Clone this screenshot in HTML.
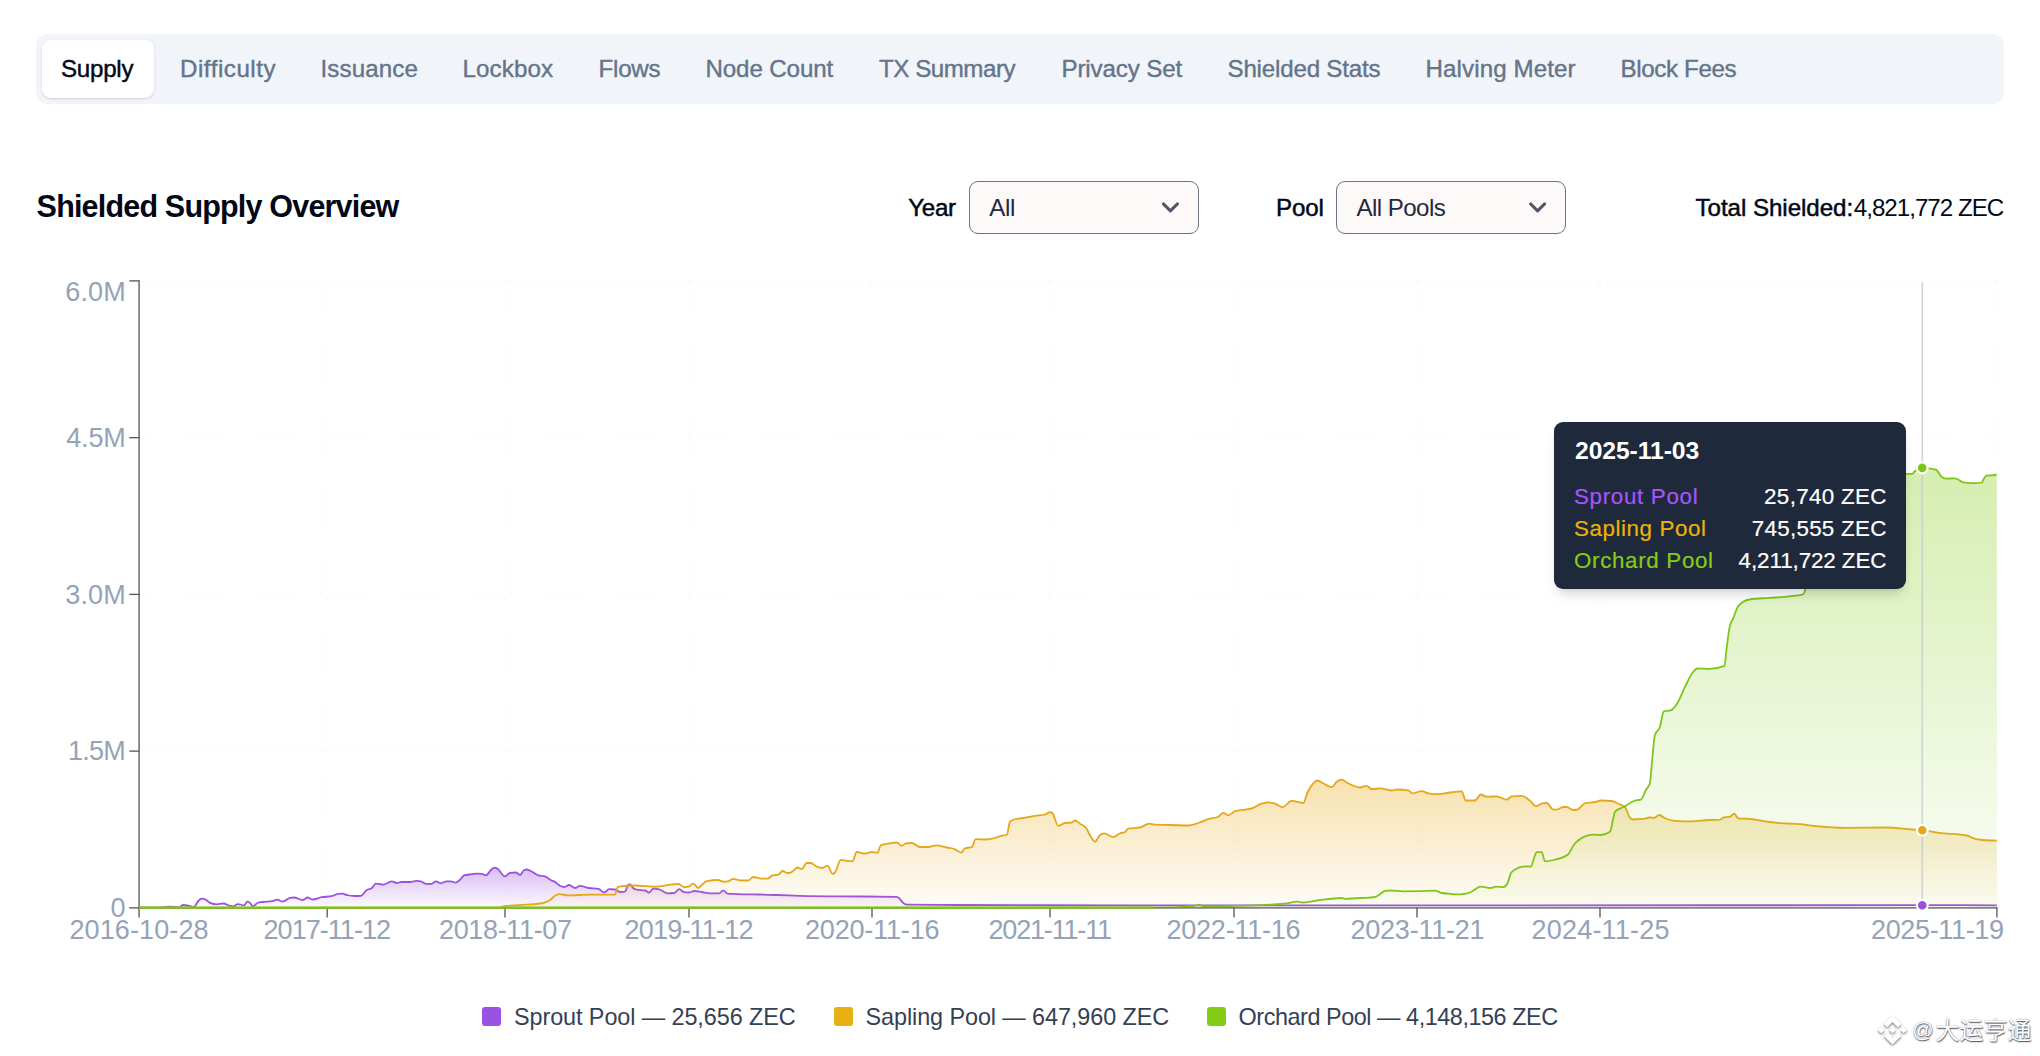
<!DOCTYPE html>
<html lang="en"><head><meta charset="utf-8"><title>Shielded Supply Overview</title>
<style>
*{box-sizing:border-box;margin:0;padding:0}
html,body{width:2040px;height:1056px;background:#fff;overflow:hidden}
body{position:relative;font-family:"Liberation Sans","Noto Sans CJK SC",sans-serif;-webkit-font-smoothing:antialiased}
.t{position:absolute;white-space:nowrap;line-height:1}
.tabs{position:absolute;left:35.7px;top:34.4px;width:1968.6px;height:69.2px;background:#f1f5f9;border-radius:12px}
.tab-on{position:absolute;left:42px;top:40px;width:112px;height:58px;background:#fff;border-radius:9px;box-shadow:0 1px 3px rgba(15,23,42,.10),0 1px 2px rgba(15,23,42,.06)}
.sel{position:absolute;top:181.1px;height:52.9px;width:230.2px;border:1.15px solid #6b7587;border-radius:9px;background:#fef9f9}
.tip{position:absolute;left:1553.6px;top:421.9px;width:352.7px;height:167.5px;background:#1e293b;border-radius:9px;box-shadow:0 9px 13px -4px rgba(0,0,0,.15),0 3px 6px -3px rgba(0,0,0,.10)}
.sw{position:absolute;top:1007px;width:19px;height:19px;border-radius:3px}
svg{position:absolute;left:0;top:0}
.wm{position:absolute;white-space:nowrap;line-height:1;color:#fff;text-shadow:.5px 1px 1.2px rgba(60,66,84,.95),0 0 1.2px rgba(60,66,84,.7)}
</style></head><body>

<nav><div class="tabs"></div><div class="tab-on"></div>
<span class="t" style="left:60.9px;top:57.00px;font-size:24.13px;letter-spacing:-0.221px;color:#020817;font-weight:400;-webkit-text-stroke:0.45px #020817">Supply</span>
<span class="t" style="left:180px;top:57.00px;font-size:24.13px;letter-spacing:0.538px;color:#64748b;font-weight:400;-webkit-text-stroke:0.4px #64748b">Difficulty</span>
<span class="t" style="left:320.5px;top:57.00px;font-size:24.13px;letter-spacing:0.123px;color:#64748b;font-weight:400;-webkit-text-stroke:0.4px #64748b">Issuance</span>
<span class="t" style="left:462.5px;top:57.00px;font-size:24.13px;letter-spacing:0.118px;color:#64748b;font-weight:400;-webkit-text-stroke:0.4px #64748b">Lockbox</span>
<span class="t" style="left:598.5px;top:57.00px;font-size:24.13px;letter-spacing:-0.234px;color:#64748b;font-weight:400;-webkit-text-stroke:0.4px #64748b">Flows</span>
<span class="t" style="left:705.5px;top:57.00px;font-size:24.13px;letter-spacing:-0.117px;color:#64748b;font-weight:400;-webkit-text-stroke:0.4px #64748b">Node Count</span>
<span class="t" style="left:879px;top:57.00px;font-size:24.13px;letter-spacing:-0.465px;color:#64748b;font-weight:400;-webkit-text-stroke:0.4px #64748b">TX Summary</span>
<span class="t" style="left:1061.5px;top:57.00px;font-size:24.13px;letter-spacing:-0.13px;color:#64748b;font-weight:400;-webkit-text-stroke:0.4px #64748b">Privacy Set</span>
<span class="t" style="left:1227.5px;top:57.00px;font-size:24.13px;letter-spacing:-0.193px;color:#64748b;font-weight:400;-webkit-text-stroke:0.4px #64748b">Shielded Stats</span>
<span class="t" style="left:1425.5px;top:57.00px;font-size:24.13px;letter-spacing:0.101px;color:#64748b;font-weight:400;-webkit-text-stroke:0.4px #64748b">Halving Meter</span>
<span class="t" style="left:1620.5px;top:57.00px;font-size:24.13px;letter-spacing:-0.363px;color:#64748b;font-weight:400;-webkit-text-stroke:0.4px #64748b">Block Fees</span>
</nav>
<header>
<span class="t" style="left:36.6px;top:191.00px;font-size:30.52px;letter-spacing:-0.819px;color:#020817;font-weight:700">Shielded Supply Overview</span>
<span class="t" style="left:908.2px;top:196.00px;font-size:24.13px;letter-spacing:-0.27px;color:#020817;font-weight:400;-webkit-text-stroke:0.5px #020817">Year</span><div class="sel" style="left:969px"></div><span class="t" style="left:989.2px;top:196.00px;font-size:24.13px;letter-spacing:-0.275px;color:#1e293b;font-weight:400">All</span>
<span class="t" style="left:1276.1px;top:196.00px;font-size:24.13px;letter-spacing:-0.209px;color:#020817;font-weight:400;-webkit-text-stroke:0.5px #020817">Pool</span><div class="sel" style="left:1336px"></div><span class="t" style="left:1356.5px;top:196.00px;font-size:24.13px;letter-spacing:-0.575px;color:#1e293b;font-weight:400">All Pools</span>
<span class="t" style="left:1695.5px;top:196.00px;font-size:24.13px;letter-spacing:-0.04px;color:#020817;font-weight:400;-webkit-text-stroke:0.5px #020817">Total Shielded:</span><span class="t" style="left:1853.8px;top:196.00px;font-size:24.13px;letter-spacing:-0.988px;color:#020817;font-weight:400">4,821,772 ZEC</span>
</header>
<main>
<svg width="2040" height="1056" viewBox="0 0 2040 1056">
<defs>
<linearGradient id="gs" x1="0" y1="0" x2="0" y2="1"><stop offset="0" stop-color="#9b51e0" stop-opacity=".38"/><stop offset="1" stop-color="#9b51e0" stop-opacity=".03"/></linearGradient>
<linearGradient id="ga" x1="0" y1="0" x2="0" y2="1"><stop offset="0" stop-color="#e8a917" stop-opacity=".35"/><stop offset="1" stop-color="#e8a917" stop-opacity=".03"/></linearGradient>
<linearGradient id="go" x1="0" y1="0" x2="0" y2="1"><stop offset="0" stop-color="#84cc16" stop-opacity=".34"/><stop offset="1" stop-color="#84cc16" stop-opacity=".03"/></linearGradient>
</defs>
<g stroke="#f9fafb" stroke-width="1.3" stroke-dasharray="4 5" fill="none">
<line x1="327" y1="281" x2="327" y2="908"/>
<line x1="505" y1="281" x2="505" y2="908"/>
<line x1="689" y1="281" x2="689" y2="908"/>
<line x1="872" y1="281" x2="872" y2="908"/>
<line x1="1050" y1="281" x2="1050" y2="908"/>
<line x1="1234" y1="281" x2="1234" y2="908"/>
<line x1="1417" y1="281" x2="1417" y2="908"/>
<line x1="1600" y1="281" x2="1600" y2="908"/>
<line x1="1997" y1="281" x2="1997" y2="908"/>
<line x1="139" y1="281" x2="1997" y2="281"/>
<line x1="139" y1="437.7" x2="1997" y2="437.7"/>
<line x1="139" y1="594.4" x2="1997" y2="594.4"/>
<line x1="139" y1="751.1" x2="1997" y2="751.1"/>
</g>
<path d="M139.0,908L139.0,907.7C146.0,907.7 153.0,907.7 160.0,907.7C163.0,907.7 166.0,906.7 169.0,906.7C172.3,906.7 175.7,907.3 179.0,907.3C180.4,907.3 181.9,905.0 183.3,905.0C185.0,905.0 186.6,905.4 188.3,905.7C190.2,906.0 192.1,907.0 194.0,907.0C195.4,907.0 196.9,902.2 198.3,900.8C199.7,899.4 201.1,898.7 202.5,898.7C203.6,898.7 204.7,899.2 205.8,899.7C207.2,900.4 208.6,902.2 210.0,902.8C212.2,903.8 214.5,904.3 216.7,904.3C218.9,904.3 221.1,903.5 223.3,903.5C225.5,903.5 227.8,905.3 230.0,905.8C231.0,906.0 232.0,906.3 233.0,906.3C234.7,906.3 236.3,904.2 238.0,904.2C240.0,904.2 242.0,905.3 244.0,905.3C245.2,905.3 246.3,901.7 247.5,901.7C248.3,901.7 249.2,902.3 250.0,903.0C251.0,903.8 252.0,906.3 253.0,906.3C254.5,906.3 256.0,903.5 257.5,903.0C259.3,902.3 261.2,902.3 263.0,902.0C265.9,901.6 268.8,901.7 271.7,901.2C273.6,900.8 275.6,899.7 277.5,899.7C279.2,899.7 280.8,901.7 282.5,901.7C285.0,901.7 287.5,898.2 290.0,897.8C291.3,897.6 292.7,897.5 294.0,897.5C297.0,897.5 300.0,900.0 303.0,900.0C304.5,900.0 306.0,897.5 307.5,897.5C309.2,897.5 310.8,899.5 312.5,899.5C315.6,899.5 318.6,897.7 321.7,897.2C325.0,896.6 328.4,896.9 331.7,896.2C333.9,895.8 336.1,893.9 338.3,893.8C339.7,893.7 341.1,893.7 342.5,893.7C343.9,893.7 345.3,894.7 346.7,895.0C349.5,895.7 352.2,896.0 355.0,896.0C357.0,896.0 359.0,895.9 361.0,895.8C362.9,895.7 364.8,891.2 366.7,890.0C368.4,888.9 370.0,889.4 371.7,888.3C373.1,887.4 374.4,883.7 375.8,883.7C378.3,883.7 380.8,884.7 383.3,884.7C386.1,884.7 388.9,881.3 391.7,881.3C393.4,881.3 395.0,883.0 396.7,883.0C398.4,883.0 400.0,882.0 401.7,882.0C404.5,882.0 407.2,882.0 410.0,882.0C412.2,882.0 414.5,880.8 416.7,880.8C418.1,880.8 419.4,881.0 420.8,881.3C422.5,881.7 424.1,883.8 425.8,883.8C427.8,883.8 429.7,883.8 431.7,883.8C433.1,883.8 434.4,881.3 435.8,881.3C437.5,881.3 439.1,883.3 440.8,883.3C442.8,883.3 444.7,881.3 446.7,881.3C448.1,881.3 449.4,881.3 450.8,881.3C452.5,881.3 454.1,882.7 455.8,882.7C457.2,882.7 458.6,880.9 460.0,879.7C461.4,878.5 462.8,875.7 464.2,875.3C466.1,874.8 468.1,874.8 470.0,874.5C472.2,874.2 474.5,873.7 476.7,873.7C478.4,873.7 480.0,873.7 481.7,873.8C483.1,873.9 484.4,875.3 485.8,875.3C487.8,875.3 489.7,870.5 491.7,869.2C492.8,868.5 493.9,867.7 495.0,867.7C495.8,867.7 496.7,868.3 497.5,868.8C500.0,870.2 502.5,876.3 505.0,876.3C506.7,876.3 508.3,873.0 510.0,872.8C511.9,872.6 513.9,872.5 515.8,872.5C517.2,872.5 518.6,875.0 520.0,875.0C521.4,875.0 522.8,870.6 524.2,870.0C525.0,869.7 525.9,869.5 526.7,869.5C528.1,869.5 529.4,870.4 530.8,871.0C533.3,872.1 535.8,874.6 538.3,875.3C540.5,876.0 542.8,875.6 545.0,876.3C546.9,876.9 548.9,878.9 550.8,880.0C552.5,880.9 554.1,881.4 555.8,882.5C557.2,883.4 558.6,885.0 560.0,885.8C561.4,886.5 562.8,887.0 564.2,887.0C565.9,887.0 567.5,885.0 569.2,885.0C571.1,885.0 573.1,888.0 575.0,888.0C576.7,888.0 578.3,885.8 580.0,885.8C582.8,885.8 585.5,887.6 588.3,888.0C591.6,888.5 595.0,888.3 598.3,888.8C600.3,889.1 602.2,892.5 604.2,892.5C605.9,892.5 607.5,889.2 609.2,889.2C611.1,889.2 613.1,889.3 615.0,889.5C616.7,889.7 618.3,892.0 620.0,892.0C621.7,892.0 623.3,891.9 625.0,891.7C626.1,891.6 627.2,885.1 628.3,884.7C629.0,884.4 629.6,884.3 630.3,884.3C631.3,884.3 632.3,887.5 633.3,888.3C634.4,889.2 635.6,889.5 636.7,889.7C639.5,890.2 642.2,890.0 645.0,890.5C646.4,890.8 647.8,892.5 649.2,892.5C650.6,892.5 651.9,888.7 653.3,888.7C655.5,888.7 657.8,889.0 660.0,889.7C662.5,890.4 665.0,893.3 667.5,893.3C669.7,893.3 672.0,893.2 674.2,893.0C675.9,892.9 677.5,889.2 679.2,889.2C680.9,889.2 682.5,892.0 684.2,892.2C685.9,892.4 687.5,892.5 689.2,892.5C690.9,892.5 692.5,891.0 694.2,891.0C696.7,891.0 699.2,891.6 701.7,892.0C704.5,892.4 707.2,893.3 710.0,893.3C713.1,893.3 716.1,893.3 719.2,893.3C720.6,893.3 721.9,890.3 723.3,890.3C724.7,890.3 726.1,893.6 727.5,893.7C732.8,894.1 738.0,894.2 743.3,894.3C748.9,894.4 754.4,894.4 760.0,894.5C765.6,894.6 771.1,894.8 776.7,895.0C784.5,895.2 792.2,895.6 800.0,895.8C813.3,896.1 826.7,896.2 840.0,896.3C858.9,896.5 877.8,896.5 896.7,896.8C897.5,896.8 898.4,897.6 899.2,898.3C900.6,899.4 901.9,901.9 903.3,903.0C904.7,904.1 906.1,904.7 907.5,904.7C923.9,904.9 940.3,904.9 956.7,905.0C1014.5,905.2 1072.2,905.3 1130.0,905.3C1253.3,905.3 1376.7,905.3 1500.0,905.3C1640.7,905.3 1781.3,905.2 1922.0,905.2C1946.9,905.2 1971.9,905.2 1996.8,905.3L1996.8,908Z" fill="url(#gs)"/>
<path d="M139.0,907.7C146.0,907.7 153.0,907.7 160.0,907.7C163.0,907.7 166.0,906.7 169.0,906.7C172.3,906.7 175.7,907.3 179.0,907.3C180.4,907.3 181.9,905.0 183.3,905.0C185.0,905.0 186.6,905.4 188.3,905.7C190.2,906.0 192.1,907.0 194.0,907.0C195.4,907.0 196.9,902.2 198.3,900.8C199.7,899.4 201.1,898.7 202.5,898.7C203.6,898.7 204.7,899.2 205.8,899.7C207.2,900.4 208.6,902.2 210.0,902.8C212.2,903.8 214.5,904.3 216.7,904.3C218.9,904.3 221.1,903.5 223.3,903.5C225.5,903.5 227.8,905.3 230.0,905.8C231.0,906.0 232.0,906.3 233.0,906.3C234.7,906.3 236.3,904.2 238.0,904.2C240.0,904.2 242.0,905.3 244.0,905.3C245.2,905.3 246.3,901.7 247.5,901.7C248.3,901.7 249.2,902.3 250.0,903.0C251.0,903.8 252.0,906.3 253.0,906.3C254.5,906.3 256.0,903.5 257.5,903.0C259.3,902.3 261.2,902.3 263.0,902.0C265.9,901.6 268.8,901.7 271.7,901.2C273.6,900.8 275.6,899.7 277.5,899.7C279.2,899.7 280.8,901.7 282.5,901.7C285.0,901.7 287.5,898.2 290.0,897.8C291.3,897.6 292.7,897.5 294.0,897.5C297.0,897.5 300.0,900.0 303.0,900.0C304.5,900.0 306.0,897.5 307.5,897.5C309.2,897.5 310.8,899.5 312.5,899.5C315.6,899.5 318.6,897.7 321.7,897.2C325.0,896.6 328.4,896.9 331.7,896.2C333.9,895.8 336.1,893.9 338.3,893.8C339.7,893.7 341.1,893.7 342.5,893.7C343.9,893.7 345.3,894.7 346.7,895.0C349.5,895.7 352.2,896.0 355.0,896.0C357.0,896.0 359.0,895.9 361.0,895.8C362.9,895.7 364.8,891.2 366.7,890.0C368.4,888.9 370.0,889.4 371.7,888.3C373.1,887.4 374.4,883.7 375.8,883.7C378.3,883.7 380.8,884.7 383.3,884.7C386.1,884.7 388.9,881.3 391.7,881.3C393.4,881.3 395.0,883.0 396.7,883.0C398.4,883.0 400.0,882.0 401.7,882.0C404.5,882.0 407.2,882.0 410.0,882.0C412.2,882.0 414.5,880.8 416.7,880.8C418.1,880.8 419.4,881.0 420.8,881.3C422.5,881.7 424.1,883.8 425.8,883.8C427.8,883.8 429.7,883.8 431.7,883.8C433.1,883.8 434.4,881.3 435.8,881.3C437.5,881.3 439.1,883.3 440.8,883.3C442.8,883.3 444.7,881.3 446.7,881.3C448.1,881.3 449.4,881.3 450.8,881.3C452.5,881.3 454.1,882.7 455.8,882.7C457.2,882.7 458.6,880.9 460.0,879.7C461.4,878.5 462.8,875.7 464.2,875.3C466.1,874.8 468.1,874.8 470.0,874.5C472.2,874.2 474.5,873.7 476.7,873.7C478.4,873.7 480.0,873.7 481.7,873.8C483.1,873.9 484.4,875.3 485.8,875.3C487.8,875.3 489.7,870.5 491.7,869.2C492.8,868.5 493.9,867.7 495.0,867.7C495.8,867.7 496.7,868.3 497.5,868.8C500.0,870.2 502.5,876.3 505.0,876.3C506.7,876.3 508.3,873.0 510.0,872.8C511.9,872.6 513.9,872.5 515.8,872.5C517.2,872.5 518.6,875.0 520.0,875.0C521.4,875.0 522.8,870.6 524.2,870.0C525.0,869.7 525.9,869.5 526.7,869.5C528.1,869.5 529.4,870.4 530.8,871.0C533.3,872.1 535.8,874.6 538.3,875.3C540.5,876.0 542.8,875.6 545.0,876.3C546.9,876.9 548.9,878.9 550.8,880.0C552.5,880.9 554.1,881.4 555.8,882.5C557.2,883.4 558.6,885.0 560.0,885.8C561.4,886.5 562.8,887.0 564.2,887.0C565.9,887.0 567.5,885.0 569.2,885.0C571.1,885.0 573.1,888.0 575.0,888.0C576.7,888.0 578.3,885.8 580.0,885.8C582.8,885.8 585.5,887.6 588.3,888.0C591.6,888.5 595.0,888.3 598.3,888.8C600.3,889.1 602.2,892.5 604.2,892.5C605.9,892.5 607.5,889.2 609.2,889.2C611.1,889.2 613.1,889.3 615.0,889.5C616.7,889.7 618.3,892.0 620.0,892.0C621.7,892.0 623.3,891.9 625.0,891.7C626.1,891.6 627.2,885.1 628.3,884.7C629.0,884.4 629.6,884.3 630.3,884.3C631.3,884.3 632.3,887.5 633.3,888.3C634.4,889.2 635.6,889.5 636.7,889.7C639.5,890.2 642.2,890.0 645.0,890.5C646.4,890.8 647.8,892.5 649.2,892.5C650.6,892.5 651.9,888.7 653.3,888.7C655.5,888.7 657.8,889.0 660.0,889.7C662.5,890.4 665.0,893.3 667.5,893.3C669.7,893.3 672.0,893.2 674.2,893.0C675.9,892.9 677.5,889.2 679.2,889.2C680.9,889.2 682.5,892.0 684.2,892.2C685.9,892.4 687.5,892.5 689.2,892.5C690.9,892.5 692.5,891.0 694.2,891.0C696.7,891.0 699.2,891.6 701.7,892.0C704.5,892.4 707.2,893.3 710.0,893.3C713.1,893.3 716.1,893.3 719.2,893.3C720.6,893.3 721.9,890.3 723.3,890.3C724.7,890.3 726.1,893.6 727.5,893.7C732.8,894.1 738.0,894.2 743.3,894.3C748.9,894.4 754.4,894.4 760.0,894.5C765.6,894.6 771.1,894.8 776.7,895.0C784.5,895.2 792.2,895.6 800.0,895.8C813.3,896.1 826.7,896.2 840.0,896.3C858.9,896.5 877.8,896.5 896.7,896.8C897.5,896.8 898.4,897.6 899.2,898.3C900.6,899.4 901.9,901.9 903.3,903.0C904.7,904.1 906.1,904.7 907.5,904.7C923.9,904.9 940.3,904.9 956.7,905.0C1014.5,905.2 1072.2,905.3 1130.0,905.3C1253.3,905.3 1376.7,905.3 1500.0,905.3C1640.7,905.3 1781.3,905.2 1922.0,905.2C1946.9,905.2 1971.9,905.2 1996.8,905.3" fill="none" stroke="#9b51e0" stroke-width="1.8" stroke-linejoin="round"/>
<path d="M139.0,908L139.0,908.0C259.3,908.0 379.7,908.0 500.0,908.0C500.8,908.0 501.7,906.9 502.5,906.7C505.0,906.0 507.5,906.0 510.0,905.7C515.6,905.1 521.1,905.2 526.7,904.7C532.2,904.3 537.8,904.1 543.3,903.0C545.5,902.5 547.8,901.4 550.0,900.0C551.9,898.8 553.9,896.3 555.8,895.3C556.9,894.7 558.1,894.2 559.2,894.2C562.2,894.2 565.3,895.3 568.3,895.3C575.5,895.3 582.8,894.7 590.0,894.7C598.3,894.7 606.7,894.7 615.0,894.7C615.8,894.7 616.7,888.3 617.5,887.5C618.3,886.7 619.2,886.4 620.0,886.3C625.0,885.8 630.0,885.5 635.0,885.5C642.2,885.5 649.5,886.7 656.7,886.7C661.1,886.7 665.6,885.2 670.0,884.7C672.8,884.4 675.5,884.0 678.3,884.0C680.3,884.0 682.2,887.2 684.2,887.2C685.6,887.2 686.9,887.0 688.3,886.7C690.0,886.3 691.6,883.7 693.3,883.7C695.0,883.7 696.6,888.0 698.3,888.0C699.7,888.0 701.1,885.3 702.5,884.2C703.9,883.1 705.3,881.5 706.7,881.2C710.6,880.4 714.4,880.0 718.3,880.0C720.0,880.0 721.6,881.7 723.3,881.7C725.0,881.7 726.6,881.6 728.3,881.3C730.0,881.0 731.6,878.8 733.3,878.8C735.5,878.8 737.8,880.2 740.0,880.3C742.8,880.4 745.5,880.5 748.3,880.5C750.0,880.5 751.6,877.0 753.3,877.0C755.5,877.0 757.8,878.1 760.0,878.3C762.5,878.6 765.0,878.7 767.5,878.7C769.2,878.7 770.8,875.6 772.5,875.3C774.4,874.9 776.4,875.1 778.3,874.7C779.7,874.4 781.1,871.0 782.5,871.0C784.2,871.0 785.8,873.0 787.5,873.0C788.3,873.0 789.2,872.9 790.0,872.8C791.1,872.6 792.2,871.6 793.3,870.8C794.7,869.8 796.1,867.5 797.5,867.5C798.9,867.5 800.3,869.2 801.7,869.2C803.4,869.2 805.0,863.0 806.7,863.0C808.1,863.0 809.4,863.0 810.8,863.0C812.8,863.0 814.7,865.9 816.7,866.7C818.6,867.5 820.6,868.0 822.5,868.0C824.2,868.0 825.8,865.7 827.5,865.7C829.2,865.7 830.8,873.8 832.5,873.8C833.3,873.8 834.2,873.3 835.0,872.5C836.9,870.5 838.9,860.0 840.8,860.0C842.8,860.0 844.7,860.6 846.7,860.8C848.6,861.0 850.6,861.3 852.5,861.3C853.9,861.3 855.3,852.0 856.7,852.0C859.5,852.0 862.2,853.7 865.0,853.7C867.2,853.7 869.5,852.0 871.7,852.0C873.6,852.0 875.6,852.7 877.5,852.7C878.6,852.7 879.7,845.8 880.8,845.3C883.9,844.0 886.9,843.8 890.0,843.3C892.2,842.9 894.5,842.5 896.7,842.5C898.4,842.5 900.0,845.8 901.7,845.8C903.1,845.8 904.4,843.4 905.8,843.3C907.8,843.1 909.7,843.0 911.7,843.0C914.5,843.0 917.2,847.0 920.0,847.0C922.8,847.0 925.5,847.0 928.3,847.0C931.1,847.0 933.9,845.3 936.7,845.3C940.0,845.3 943.4,846.8 946.7,847.5C949.5,848.1 952.2,848.2 955.0,849.3C957.1,850.1 959.2,852.7 961.3,852.7C962.5,852.7 963.8,848.7 965.0,848.3C967.2,847.6 969.5,847.9 971.7,847.2C973.1,846.8 974.4,839.2 975.8,839.2C978.9,839.2 981.9,839.5 985.0,839.5C988.3,839.5 991.7,839.0 995.0,838.0C996.9,837.4 998.9,836.3 1000.8,835.8C1002.8,835.3 1004.7,835.5 1006.7,835.0C1007.8,834.7 1008.9,822.9 1010.0,821.7C1011.4,820.2 1012.8,820.0 1014.2,819.5C1017.2,818.5 1020.3,818.5 1023.3,818.0C1027.2,817.3 1031.1,816.4 1035.0,815.8C1038.3,815.3 1041.7,815.4 1045.0,814.5C1046.7,814.1 1048.3,812.2 1050.0,812.2C1050.8,812.2 1051.7,812.6 1052.5,813.3C1054.4,815.0 1056.4,825.8 1058.3,825.8C1060.5,825.8 1062.8,823.3 1065.0,823.0C1067.2,822.7 1069.5,822.8 1071.7,822.5C1072.8,822.3 1073.9,820.5 1075.0,820.5C1076.7,820.5 1078.3,822.6 1080.0,823.7C1081.9,825.0 1083.9,825.1 1085.8,827.5C1087.8,829.9 1089.7,835.7 1091.7,838.3C1092.8,839.7 1093.9,841.7 1095.0,841.7C1096.7,841.7 1098.3,836.3 1100.0,835.0C1101.4,833.9 1102.8,833.3 1104.2,833.3C1107.2,833.3 1110.3,837.2 1113.3,837.2C1115.3,837.2 1117.2,834.6 1119.2,833.7C1121.1,832.8 1123.1,833.1 1125.0,832.0C1126.1,831.4 1127.2,828.9 1128.3,828.7C1132.2,827.9 1136.1,828.3 1140.0,827.5C1143.1,826.9 1146.1,823.7 1149.2,823.7C1150.9,823.7 1152.5,824.6 1154.2,824.7C1159.5,824.9 1164.7,824.9 1170.0,825.0C1176.1,825.1 1182.2,825.5 1188.3,825.5C1191.6,825.5 1195.0,824.0 1198.3,823.0C1202.2,821.8 1206.1,819.8 1210.0,818.7C1212.8,817.9 1215.5,818.0 1218.3,816.7C1220.0,815.9 1221.6,812.8 1223.3,812.8C1225.0,812.8 1226.6,815.3 1228.3,815.3C1230.5,815.3 1232.8,811.9 1235.0,811.2C1238.3,810.2 1241.7,810.3 1245.0,809.7C1247.8,809.2 1250.5,808.9 1253.3,807.8C1255.5,806.9 1257.8,805.1 1260.0,804.2C1262.8,803.1 1265.5,802.3 1268.3,802.3C1270.5,802.3 1272.8,803.0 1275.0,803.7C1277.5,804.5 1280.0,807.2 1282.5,807.2C1285.6,807.2 1288.6,800.8 1291.7,800.8C1295.6,800.8 1299.4,803.0 1303.3,803.0C1304.7,803.0 1306.1,795.5 1307.5,792.5C1309.4,788.4 1311.4,785.3 1313.3,783.3C1314.7,781.8 1316.1,780.5 1317.5,780.5C1319.4,780.5 1321.4,782.4 1323.3,783.3C1326.1,784.6 1328.9,787.2 1331.7,787.2C1333.4,787.2 1335.0,783.0 1336.7,781.7C1338.4,780.5 1340.0,779.7 1341.7,779.7C1343.6,779.7 1345.6,782.0 1347.5,783.0C1351.7,785.1 1355.8,787.5 1360.0,787.5C1362.2,787.5 1364.5,785.8 1366.7,785.8C1368.4,785.8 1370.0,789.2 1371.7,789.2C1374.5,789.2 1377.2,788.3 1380.0,788.3C1383.9,788.3 1387.8,790.5 1391.7,790.5C1393.4,790.5 1395.0,789.5 1396.7,789.5C1400.6,789.5 1404.4,789.8 1408.3,790.3C1409.7,790.5 1411.1,793.3 1412.5,793.3C1415.6,793.3 1418.6,791.2 1421.7,791.2C1423.9,791.2 1426.1,792.8 1428.3,793.3C1431.1,793.9 1433.9,794.2 1436.7,794.2C1440.0,794.2 1443.4,793.5 1446.7,793.0C1447.8,792.8 1448.9,792.7 1450.0,792.5C1453.9,792.0 1457.8,791.3 1461.7,791.3C1463.1,791.3 1464.4,800.5 1465.8,800.5C1468.9,800.5 1471.9,800.5 1475.0,800.5C1476.9,800.5 1478.9,794.5 1480.8,794.5C1482.8,794.5 1484.7,796.7 1486.7,796.7C1490.0,796.7 1493.4,796.3 1496.7,796.3C1500.0,796.3 1503.4,799.7 1506.7,799.7C1508.4,799.7 1510.0,796.5 1511.7,796.3C1515.0,796.0 1518.4,795.8 1521.7,795.8C1524.5,795.8 1527.2,798.6 1530.0,800.8C1531.9,802.3 1533.9,806.2 1535.8,806.2C1538.0,806.2 1540.3,803.6 1542.5,803.3C1543.9,803.1 1545.3,803.0 1546.7,803.0C1548.9,803.0 1551.1,809.7 1553.3,809.7C1554.4,809.7 1555.6,809.7 1556.7,809.7C1558.9,809.7 1561.1,807.0 1563.3,807.0C1564.4,807.0 1565.6,807.0 1566.7,807.0C1568.9,807.0 1571.1,810.0 1573.3,810.0C1574.7,810.0 1576.1,809.8 1577.5,809.5C1580.0,808.9 1582.5,803.9 1585.0,803.3C1588.3,802.4 1591.7,802.7 1595.0,802.0C1596.9,801.6 1598.9,800.5 1600.8,800.5C1604.4,800.5 1608.1,800.7 1611.7,801.0C1613.9,801.2 1616.1,802.8 1618.3,803.8C1620.5,804.8 1622.8,804.9 1625.0,807.0C1626.4,808.3 1627.8,814.6 1629.2,816.7C1630.3,818.3 1631.4,819.5 1632.5,819.5C1636.7,819.5 1640.8,819.2 1645.0,818.7C1646.4,818.5 1647.8,817.5 1649.2,817.5C1650.9,817.5 1652.5,817.8 1654.2,817.8C1655.9,817.8 1657.5,815.0 1659.2,815.0C1661.1,815.0 1663.1,817.4 1665.0,818.3C1668.3,819.8 1671.7,820.6 1675.0,820.8C1680.6,821.1 1686.1,821.3 1691.7,821.3C1697.2,821.3 1702.8,820.3 1708.3,820.0C1712.2,819.8 1716.1,819.9 1720.0,819.7C1721.1,819.6 1722.2,817.8 1723.3,817.5C1725.5,817.0 1727.8,817.2 1730.0,816.7C1731.4,816.4 1732.8,813.7 1734.2,813.7C1735.6,813.7 1736.9,818.2 1738.3,818.3C1742.2,818.6 1746.1,818.5 1750.0,818.8C1755.6,819.3 1761.1,820.9 1766.7,821.7C1771.1,822.3 1775.6,822.7 1780.0,823.1C1786.6,823.7 1793.3,823.6 1799.9,824.2C1804.3,824.6 1808.7,825.3 1813.1,825.8C1824.2,826.9 1835.2,827.8 1846.3,827.8C1859.6,827.8 1872.8,827.5 1886.1,827.5C1894.9,827.5 1903.8,828.9 1912.6,829.5C1915.8,829.7 1919.1,829.9 1922.3,830.2C1927.9,830.8 1933.5,832.1 1939.1,832.8C1948.4,834.0 1957.6,833.7 1966.9,835.5C1969.1,835.9 1971.4,837.7 1973.6,838.4C1976.7,839.4 1979.7,839.7 1982.8,840.0C1987.5,840.4 1992.1,840.5 1996.8,840.6L1996.8,908Z" fill="url(#ga)"/>
<path d="M139.0,908.0C259.3,908.0 379.7,908.0 500.0,908.0C500.8,908.0 501.7,906.9 502.5,906.7C505.0,906.0 507.5,906.0 510.0,905.7C515.6,905.1 521.1,905.2 526.7,904.7C532.2,904.3 537.8,904.1 543.3,903.0C545.5,902.5 547.8,901.4 550.0,900.0C551.9,898.8 553.9,896.3 555.8,895.3C556.9,894.7 558.1,894.2 559.2,894.2C562.2,894.2 565.3,895.3 568.3,895.3C575.5,895.3 582.8,894.7 590.0,894.7C598.3,894.7 606.7,894.7 615.0,894.7C615.8,894.7 616.7,888.3 617.5,887.5C618.3,886.7 619.2,886.4 620.0,886.3C625.0,885.8 630.0,885.5 635.0,885.5C642.2,885.5 649.5,886.7 656.7,886.7C661.1,886.7 665.6,885.2 670.0,884.7C672.8,884.4 675.5,884.0 678.3,884.0C680.3,884.0 682.2,887.2 684.2,887.2C685.6,887.2 686.9,887.0 688.3,886.7C690.0,886.3 691.6,883.7 693.3,883.7C695.0,883.7 696.6,888.0 698.3,888.0C699.7,888.0 701.1,885.3 702.5,884.2C703.9,883.1 705.3,881.5 706.7,881.2C710.6,880.4 714.4,880.0 718.3,880.0C720.0,880.0 721.6,881.7 723.3,881.7C725.0,881.7 726.6,881.6 728.3,881.3C730.0,881.0 731.6,878.8 733.3,878.8C735.5,878.8 737.8,880.2 740.0,880.3C742.8,880.4 745.5,880.5 748.3,880.5C750.0,880.5 751.6,877.0 753.3,877.0C755.5,877.0 757.8,878.1 760.0,878.3C762.5,878.6 765.0,878.7 767.5,878.7C769.2,878.7 770.8,875.6 772.5,875.3C774.4,874.9 776.4,875.1 778.3,874.7C779.7,874.4 781.1,871.0 782.5,871.0C784.2,871.0 785.8,873.0 787.5,873.0C788.3,873.0 789.2,872.9 790.0,872.8C791.1,872.6 792.2,871.6 793.3,870.8C794.7,869.8 796.1,867.5 797.5,867.5C798.9,867.5 800.3,869.2 801.7,869.2C803.4,869.2 805.0,863.0 806.7,863.0C808.1,863.0 809.4,863.0 810.8,863.0C812.8,863.0 814.7,865.9 816.7,866.7C818.6,867.5 820.6,868.0 822.5,868.0C824.2,868.0 825.8,865.7 827.5,865.7C829.2,865.7 830.8,873.8 832.5,873.8C833.3,873.8 834.2,873.3 835.0,872.5C836.9,870.5 838.9,860.0 840.8,860.0C842.8,860.0 844.7,860.6 846.7,860.8C848.6,861.0 850.6,861.3 852.5,861.3C853.9,861.3 855.3,852.0 856.7,852.0C859.5,852.0 862.2,853.7 865.0,853.7C867.2,853.7 869.5,852.0 871.7,852.0C873.6,852.0 875.6,852.7 877.5,852.7C878.6,852.7 879.7,845.8 880.8,845.3C883.9,844.0 886.9,843.8 890.0,843.3C892.2,842.9 894.5,842.5 896.7,842.5C898.4,842.5 900.0,845.8 901.7,845.8C903.1,845.8 904.4,843.4 905.8,843.3C907.8,843.1 909.7,843.0 911.7,843.0C914.5,843.0 917.2,847.0 920.0,847.0C922.8,847.0 925.5,847.0 928.3,847.0C931.1,847.0 933.9,845.3 936.7,845.3C940.0,845.3 943.4,846.8 946.7,847.5C949.5,848.1 952.2,848.2 955.0,849.3C957.1,850.1 959.2,852.7 961.3,852.7C962.5,852.7 963.8,848.7 965.0,848.3C967.2,847.6 969.5,847.9 971.7,847.2C973.1,846.8 974.4,839.2 975.8,839.2C978.9,839.2 981.9,839.5 985.0,839.5C988.3,839.5 991.7,839.0 995.0,838.0C996.9,837.4 998.9,836.3 1000.8,835.8C1002.8,835.3 1004.7,835.5 1006.7,835.0C1007.8,834.7 1008.9,822.9 1010.0,821.7C1011.4,820.2 1012.8,820.0 1014.2,819.5C1017.2,818.5 1020.3,818.5 1023.3,818.0C1027.2,817.3 1031.1,816.4 1035.0,815.8C1038.3,815.3 1041.7,815.4 1045.0,814.5C1046.7,814.1 1048.3,812.2 1050.0,812.2C1050.8,812.2 1051.7,812.6 1052.5,813.3C1054.4,815.0 1056.4,825.8 1058.3,825.8C1060.5,825.8 1062.8,823.3 1065.0,823.0C1067.2,822.7 1069.5,822.8 1071.7,822.5C1072.8,822.3 1073.9,820.5 1075.0,820.5C1076.7,820.5 1078.3,822.6 1080.0,823.7C1081.9,825.0 1083.9,825.1 1085.8,827.5C1087.8,829.9 1089.7,835.7 1091.7,838.3C1092.8,839.7 1093.9,841.7 1095.0,841.7C1096.7,841.7 1098.3,836.3 1100.0,835.0C1101.4,833.9 1102.8,833.3 1104.2,833.3C1107.2,833.3 1110.3,837.2 1113.3,837.2C1115.3,837.2 1117.2,834.6 1119.2,833.7C1121.1,832.8 1123.1,833.1 1125.0,832.0C1126.1,831.4 1127.2,828.9 1128.3,828.7C1132.2,827.9 1136.1,828.3 1140.0,827.5C1143.1,826.9 1146.1,823.7 1149.2,823.7C1150.9,823.7 1152.5,824.6 1154.2,824.7C1159.5,824.9 1164.7,824.9 1170.0,825.0C1176.1,825.1 1182.2,825.5 1188.3,825.5C1191.6,825.5 1195.0,824.0 1198.3,823.0C1202.2,821.8 1206.1,819.8 1210.0,818.7C1212.8,817.9 1215.5,818.0 1218.3,816.7C1220.0,815.9 1221.6,812.8 1223.3,812.8C1225.0,812.8 1226.6,815.3 1228.3,815.3C1230.5,815.3 1232.8,811.9 1235.0,811.2C1238.3,810.2 1241.7,810.3 1245.0,809.7C1247.8,809.2 1250.5,808.9 1253.3,807.8C1255.5,806.9 1257.8,805.1 1260.0,804.2C1262.8,803.1 1265.5,802.3 1268.3,802.3C1270.5,802.3 1272.8,803.0 1275.0,803.7C1277.5,804.5 1280.0,807.2 1282.5,807.2C1285.6,807.2 1288.6,800.8 1291.7,800.8C1295.6,800.8 1299.4,803.0 1303.3,803.0C1304.7,803.0 1306.1,795.5 1307.5,792.5C1309.4,788.4 1311.4,785.3 1313.3,783.3C1314.7,781.8 1316.1,780.5 1317.5,780.5C1319.4,780.5 1321.4,782.4 1323.3,783.3C1326.1,784.6 1328.9,787.2 1331.7,787.2C1333.4,787.2 1335.0,783.0 1336.7,781.7C1338.4,780.5 1340.0,779.7 1341.7,779.7C1343.6,779.7 1345.6,782.0 1347.5,783.0C1351.7,785.1 1355.8,787.5 1360.0,787.5C1362.2,787.5 1364.5,785.8 1366.7,785.8C1368.4,785.8 1370.0,789.2 1371.7,789.2C1374.5,789.2 1377.2,788.3 1380.0,788.3C1383.9,788.3 1387.8,790.5 1391.7,790.5C1393.4,790.5 1395.0,789.5 1396.7,789.5C1400.6,789.5 1404.4,789.8 1408.3,790.3C1409.7,790.5 1411.1,793.3 1412.5,793.3C1415.6,793.3 1418.6,791.2 1421.7,791.2C1423.9,791.2 1426.1,792.8 1428.3,793.3C1431.1,793.9 1433.9,794.2 1436.7,794.2C1440.0,794.2 1443.4,793.5 1446.7,793.0C1447.8,792.8 1448.9,792.7 1450.0,792.5C1453.9,792.0 1457.8,791.3 1461.7,791.3C1463.1,791.3 1464.4,800.5 1465.8,800.5C1468.9,800.5 1471.9,800.5 1475.0,800.5C1476.9,800.5 1478.9,794.5 1480.8,794.5C1482.8,794.5 1484.7,796.7 1486.7,796.7C1490.0,796.7 1493.4,796.3 1496.7,796.3C1500.0,796.3 1503.4,799.7 1506.7,799.7C1508.4,799.7 1510.0,796.5 1511.7,796.3C1515.0,796.0 1518.4,795.8 1521.7,795.8C1524.5,795.8 1527.2,798.6 1530.0,800.8C1531.9,802.3 1533.9,806.2 1535.8,806.2C1538.0,806.2 1540.3,803.6 1542.5,803.3C1543.9,803.1 1545.3,803.0 1546.7,803.0C1548.9,803.0 1551.1,809.7 1553.3,809.7C1554.4,809.7 1555.6,809.7 1556.7,809.7C1558.9,809.7 1561.1,807.0 1563.3,807.0C1564.4,807.0 1565.6,807.0 1566.7,807.0C1568.9,807.0 1571.1,810.0 1573.3,810.0C1574.7,810.0 1576.1,809.8 1577.5,809.5C1580.0,808.9 1582.5,803.9 1585.0,803.3C1588.3,802.4 1591.7,802.7 1595.0,802.0C1596.9,801.6 1598.9,800.5 1600.8,800.5C1604.4,800.5 1608.1,800.7 1611.7,801.0C1613.9,801.2 1616.1,802.8 1618.3,803.8C1620.5,804.8 1622.8,804.9 1625.0,807.0C1626.4,808.3 1627.8,814.6 1629.2,816.7C1630.3,818.3 1631.4,819.5 1632.5,819.5C1636.7,819.5 1640.8,819.2 1645.0,818.7C1646.4,818.5 1647.8,817.5 1649.2,817.5C1650.9,817.5 1652.5,817.8 1654.2,817.8C1655.9,817.8 1657.5,815.0 1659.2,815.0C1661.1,815.0 1663.1,817.4 1665.0,818.3C1668.3,819.8 1671.7,820.6 1675.0,820.8C1680.6,821.1 1686.1,821.3 1691.7,821.3C1697.2,821.3 1702.8,820.3 1708.3,820.0C1712.2,819.8 1716.1,819.9 1720.0,819.7C1721.1,819.6 1722.2,817.8 1723.3,817.5C1725.5,817.0 1727.8,817.2 1730.0,816.7C1731.4,816.4 1732.8,813.7 1734.2,813.7C1735.6,813.7 1736.9,818.2 1738.3,818.3C1742.2,818.6 1746.1,818.5 1750.0,818.8C1755.6,819.3 1761.1,820.9 1766.7,821.7C1771.1,822.3 1775.6,822.7 1780.0,823.1C1786.6,823.7 1793.3,823.6 1799.9,824.2C1804.3,824.6 1808.7,825.3 1813.1,825.8C1824.2,826.9 1835.2,827.8 1846.3,827.8C1859.6,827.8 1872.8,827.5 1886.1,827.5C1894.9,827.5 1903.8,828.9 1912.6,829.5C1915.8,829.7 1919.1,829.9 1922.3,830.2C1927.9,830.8 1933.5,832.1 1939.1,832.8C1948.4,834.0 1957.6,833.7 1966.9,835.5C1969.1,835.9 1971.4,837.7 1973.6,838.4C1976.7,839.4 1979.7,839.7 1982.8,840.0C1987.5,840.4 1992.1,840.5 1996.8,840.6" fill="none" stroke="#e5a81a" stroke-width="1.8" stroke-linejoin="round"/>
<path d="M139.0,908L139.0,907.7C477.1,907.7 815.2,907.7 1153.3,907.7C1167.2,907.7 1181.1,907.1 1195.0,905.8C1196.4,905.7 1197.8,904.7 1199.2,904.7C1200.6,904.7 1201.9,906.3 1203.3,906.3C1214.4,906.3 1225.6,906.1 1236.7,905.8C1247.8,905.5 1258.9,905.4 1270.0,904.7C1275.6,904.3 1281.1,904.0 1286.7,903.3C1290.0,902.9 1293.4,901.7 1296.7,901.7C1298.9,901.7 1301.1,902.5 1303.3,902.5C1308.9,902.5 1314.4,900.7 1320.0,900.0C1327.2,899.1 1334.5,898.0 1341.7,898.0C1342.8,898.0 1343.9,898.8 1345.0,898.8C1350.6,898.8 1356.1,898.4 1361.7,898.0C1366.1,897.7 1370.6,897.7 1375.0,897.0C1376.7,896.7 1378.3,895.2 1380.0,894.2C1381.7,893.2 1383.3,891.0 1385.0,890.8C1386.7,890.6 1388.3,890.5 1390.0,890.5C1394.4,890.5 1398.9,891.3 1403.3,891.3C1408.9,891.3 1414.4,891.3 1420.0,891.2C1425.0,891.1 1430.0,890.7 1435.0,890.7C1437.2,890.7 1439.5,892.6 1441.7,893.0C1444.5,893.5 1447.2,893.6 1450.0,893.8C1453.3,894.1 1456.7,894.3 1460.0,894.3C1463.3,894.3 1466.7,893.7 1470.0,892.5C1473.6,891.2 1477.2,886.7 1480.8,886.7C1484.1,886.7 1487.5,888.0 1490.8,888.0C1492.5,888.0 1494.1,886.7 1495.8,886.7C1498.3,886.7 1500.8,887.2 1503.3,887.2C1504.7,887.2 1506.1,885.9 1507.5,883.3C1508.6,881.3 1509.7,875.3 1510.8,873.3C1512.2,870.8 1513.6,870.4 1515.0,869.5C1518.3,867.4 1521.7,866.3 1525.0,866.3C1526.9,866.3 1528.9,866.7 1530.8,866.7C1531.9,866.7 1533.1,860.2 1534.2,857.5C1535.0,855.5 1535.9,852.2 1536.7,852.2C1538.4,852.2 1540.0,852.2 1541.7,852.2C1542.8,852.2 1543.9,861.3 1545.0,861.3C1547.8,861.3 1550.5,860.7 1553.3,860.0C1558.3,858.8 1563.3,858.1 1568.3,854.2C1570.0,852.9 1571.6,848.1 1573.3,845.8C1574.4,844.2 1575.6,842.7 1576.7,841.7C1582.2,837.0 1587.8,834.7 1593.3,834.7C1595.8,834.7 1598.3,835.0 1600.8,835.0C1603.9,835.0 1606.9,833.9 1610.0,831.7C1611.1,830.9 1612.2,822.6 1613.3,818.3C1613.9,816.1 1614.4,812.3 1615.0,811.7C1618.3,808.1 1621.7,808.2 1625.0,806.3C1628.3,804.4 1631.7,801.4 1635.0,800.5C1636.9,800.0 1638.9,800.2 1640.8,799.7C1642.5,799.2 1644.2,793.1 1645.9,790.0C1647.2,787.6 1648.6,787.6 1649.9,782.9C1650.6,780.5 1651.2,769.5 1651.9,763.0C1652.9,753.3 1653.9,738.5 1654.9,735.2C1656.5,729.9 1658.2,732.0 1659.8,727.2C1661.1,723.3 1662.5,711.7 1663.8,711.3C1666.1,710.6 1668.5,711.0 1670.8,710.3C1672.8,709.7 1674.7,707.1 1676.7,704.3C1679.7,700.0 1682.7,691.3 1685.7,685.4C1688.0,680.8 1690.4,675.4 1692.7,672.5C1694.3,670.5 1696.0,668.5 1697.6,668.5C1701.6,668.5 1705.6,668.9 1709.6,668.9C1714.6,668.9 1719.5,667.9 1724.5,665.9C1725.2,665.6 1725.8,654.8 1726.5,649.6C1727.5,641.8 1728.5,632.8 1729.5,627.7C1730.8,621.1 1732.1,621.0 1733.4,617.8C1735.1,613.7 1736.7,607.8 1738.4,605.9C1742.1,601.6 1745.7,600.1 1749.4,599.5C1756.0,598.4 1762.6,598.4 1769.2,597.9C1775.8,597.4 1782.5,597.1 1789.1,596.3C1793.8,595.8 1798.4,595.6 1803.1,594.3C1803.8,594.1 1804.4,592.8 1805.1,589.9C1805.7,587.1 1806.4,568.5 1807.0,560.0C1808.3,542.0 1809.7,529.8 1811.0,525.0C1814.7,511.7 1818.3,509.1 1822.0,505.0C1829.7,496.3 1837.3,495.7 1845.0,492.0C1856.7,486.4 1868.3,483.3 1880.0,480.0C1888.7,477.5 1897.5,473.8 1906.2,473.8C1908.3,473.8 1910.3,473.8 1912.4,473.8C1913.2,473.8 1913.9,471.9 1914.7,471.2C1917.2,469.0 1919.7,467.9 1922.2,467.9C1925.0,467.9 1927.8,468.2 1930.6,468.6C1932.4,468.9 1934.1,469.0 1935.9,469.7C1936.9,470.1 1937.8,471.7 1938.8,472.9C1939.8,474.1 1940.8,476.4 1941.8,477.1C1943.2,478.1 1944.5,478.6 1945.9,478.6C1948.8,478.6 1951.8,478.4 1954.7,478.4C1955.9,478.4 1957.0,479.0 1958.2,479.5C1959.6,480.1 1961.0,481.7 1962.4,482.1C1964.1,482.6 1965.9,482.8 1967.6,482.9C1970.4,483.1 1973.1,483.2 1975.9,483.2C1977.9,483.2 1979.8,483.0 1981.8,482.5C1982.6,482.3 1983.3,479.3 1984.1,478.2C1984.9,477.0 1985.7,475.7 1986.5,475.6C1988.1,475.4 1989.6,475.4 1991.2,475.3C1993.1,475.1 1994.9,474.9 1996.8,474.7L1996.8,908Z" fill="url(#go)"/>
<path d="M139.0,907.7C477.1,907.7 815.2,907.7 1153.3,907.7C1167.2,907.7 1181.1,907.1 1195.0,905.8C1196.4,905.7 1197.8,904.7 1199.2,904.7C1200.6,904.7 1201.9,906.3 1203.3,906.3C1214.4,906.3 1225.6,906.1 1236.7,905.8C1247.8,905.5 1258.9,905.4 1270.0,904.7C1275.6,904.3 1281.1,904.0 1286.7,903.3C1290.0,902.9 1293.4,901.7 1296.7,901.7C1298.9,901.7 1301.1,902.5 1303.3,902.5C1308.9,902.5 1314.4,900.7 1320.0,900.0C1327.2,899.1 1334.5,898.0 1341.7,898.0C1342.8,898.0 1343.9,898.8 1345.0,898.8C1350.6,898.8 1356.1,898.4 1361.7,898.0C1366.1,897.7 1370.6,897.7 1375.0,897.0C1376.7,896.7 1378.3,895.2 1380.0,894.2C1381.7,893.2 1383.3,891.0 1385.0,890.8C1386.7,890.6 1388.3,890.5 1390.0,890.5C1394.4,890.5 1398.9,891.3 1403.3,891.3C1408.9,891.3 1414.4,891.3 1420.0,891.2C1425.0,891.1 1430.0,890.7 1435.0,890.7C1437.2,890.7 1439.5,892.6 1441.7,893.0C1444.5,893.5 1447.2,893.6 1450.0,893.8C1453.3,894.1 1456.7,894.3 1460.0,894.3C1463.3,894.3 1466.7,893.7 1470.0,892.5C1473.6,891.2 1477.2,886.7 1480.8,886.7C1484.1,886.7 1487.5,888.0 1490.8,888.0C1492.5,888.0 1494.1,886.7 1495.8,886.7C1498.3,886.7 1500.8,887.2 1503.3,887.2C1504.7,887.2 1506.1,885.9 1507.5,883.3C1508.6,881.3 1509.7,875.3 1510.8,873.3C1512.2,870.8 1513.6,870.4 1515.0,869.5C1518.3,867.4 1521.7,866.3 1525.0,866.3C1526.9,866.3 1528.9,866.7 1530.8,866.7C1531.9,866.7 1533.1,860.2 1534.2,857.5C1535.0,855.5 1535.9,852.2 1536.7,852.2C1538.4,852.2 1540.0,852.2 1541.7,852.2C1542.8,852.2 1543.9,861.3 1545.0,861.3C1547.8,861.3 1550.5,860.7 1553.3,860.0C1558.3,858.8 1563.3,858.1 1568.3,854.2C1570.0,852.9 1571.6,848.1 1573.3,845.8C1574.4,844.2 1575.6,842.7 1576.7,841.7C1582.2,837.0 1587.8,834.7 1593.3,834.7C1595.8,834.7 1598.3,835.0 1600.8,835.0C1603.9,835.0 1606.9,833.9 1610.0,831.7C1611.1,830.9 1612.2,822.6 1613.3,818.3C1613.9,816.1 1614.4,812.3 1615.0,811.7C1618.3,808.1 1621.7,808.2 1625.0,806.3C1628.3,804.4 1631.7,801.4 1635.0,800.5C1636.9,800.0 1638.9,800.2 1640.8,799.7C1642.5,799.2 1644.2,793.1 1645.9,790.0C1647.2,787.6 1648.6,787.6 1649.9,782.9C1650.6,780.5 1651.2,769.5 1651.9,763.0C1652.9,753.3 1653.9,738.5 1654.9,735.2C1656.5,729.9 1658.2,732.0 1659.8,727.2C1661.1,723.3 1662.5,711.7 1663.8,711.3C1666.1,710.6 1668.5,711.0 1670.8,710.3C1672.8,709.7 1674.7,707.1 1676.7,704.3C1679.7,700.0 1682.7,691.3 1685.7,685.4C1688.0,680.8 1690.4,675.4 1692.7,672.5C1694.3,670.5 1696.0,668.5 1697.6,668.5C1701.6,668.5 1705.6,668.9 1709.6,668.9C1714.6,668.9 1719.5,667.9 1724.5,665.9C1725.2,665.6 1725.8,654.8 1726.5,649.6C1727.5,641.8 1728.5,632.8 1729.5,627.7C1730.8,621.1 1732.1,621.0 1733.4,617.8C1735.1,613.7 1736.7,607.8 1738.4,605.9C1742.1,601.6 1745.7,600.1 1749.4,599.5C1756.0,598.4 1762.6,598.4 1769.2,597.9C1775.8,597.4 1782.5,597.1 1789.1,596.3C1793.8,595.8 1798.4,595.6 1803.1,594.3C1803.8,594.1 1804.4,592.8 1805.1,589.9C1805.7,587.1 1806.4,568.5 1807.0,560.0C1808.3,542.0 1809.7,529.8 1811.0,525.0C1814.7,511.7 1818.3,509.1 1822.0,505.0C1829.7,496.3 1837.3,495.7 1845.0,492.0C1856.7,486.4 1868.3,483.3 1880.0,480.0C1888.7,477.5 1897.5,473.8 1906.2,473.8C1908.3,473.8 1910.3,473.8 1912.4,473.8C1913.2,473.8 1913.9,471.9 1914.7,471.2C1917.2,469.0 1919.7,467.9 1922.2,467.9C1925.0,467.9 1927.8,468.2 1930.6,468.6C1932.4,468.9 1934.1,469.0 1935.9,469.7C1936.9,470.1 1937.8,471.7 1938.8,472.9C1939.8,474.1 1940.8,476.4 1941.8,477.1C1943.2,478.1 1944.5,478.6 1945.9,478.6C1948.8,478.6 1951.8,478.4 1954.7,478.4C1955.9,478.4 1957.0,479.0 1958.2,479.5C1959.6,480.1 1961.0,481.7 1962.4,482.1C1964.1,482.6 1965.9,482.8 1967.6,482.9C1970.4,483.1 1973.1,483.2 1975.9,483.2C1977.9,483.2 1979.8,483.0 1981.8,482.5C1982.6,482.3 1983.3,479.3 1984.1,478.2C1984.9,477.0 1985.7,475.7 1986.5,475.6C1988.1,475.4 1989.6,475.4 1991.2,475.3C1993.1,475.1 1994.9,474.9 1996.8,474.7" fill="none" stroke="#7fc51a" stroke-width="1.8" stroke-linejoin="round"/>
<g stroke="#828282" stroke-width="1.8" fill="none">
<line x1="139.1" y1="280.2" x2="139.1" y2="917.4"/>
<line x1="139" y1="907.9" x2="1997.6" y2="907.9"/>
</g>
<g stroke="#555" stroke-width="1.3" fill="none">
<line x1="129.3" y1="280.9" x2="139.2" y2="280.9"/>
<line x1="129.3" y1="437.7" x2="139.2" y2="437.7"/>
<line x1="129.3" y1="594.4" x2="139.2" y2="594.4"/>
<line x1="129.3" y1="751.1" x2="139.2" y2="751.1"/>
<line x1="129.3" y1="907.9" x2="139.2" y2="907.9"/>
<line x1="327.2" y1="907.8" x2="327.2" y2="917.4"/>
<line x1="505" y1="907.8" x2="505" y2="917.4"/>
<line x1="689" y1="907.8" x2="689" y2="917.4"/>
<line x1="872" y1="907.8" x2="872" y2="917.4"/>
<line x1="1050" y1="907.8" x2="1050" y2="917.4"/>
<line x1="1234" y1="907.8" x2="1234" y2="917.4"/>
<line x1="1417" y1="907.8" x2="1417" y2="917.4"/>
<line x1="1600" y1="907.8" x2="1600" y2="917.4"/>
<line x1="1996.9" y1="907.8" x2="1996.9" y2="917.4"/>
</g>
<path d="M139.2,907.7 L1153.3,907.7" fill="none" stroke="#7fc51a" stroke-width="2.2"/>
<line x1="1922.2" y1="282" x2="1922.2" y2="908" stroke="#c9cbd0" stroke-width="1.3"/>
<circle cx="1922.2" cy="467.9" r="5.4" fill="#7fc51a" stroke="#fff" stroke-width="2.2"/>
<circle cx="1922.3" cy="830.2" r="5.4" fill="#e5a81a" stroke="#fff" stroke-width="2.2"/>
<circle cx="1922.3" cy="905.2" r="5.4" fill="#9b51e0" stroke="#fff" stroke-width="2.2"/>
<text x="65.2" y="300.7" font-size="27.03" letter-spacing="0.182" fill="#94a3b8">6.0M</text>
<text x="66.2" y="446.8" font-size="27.03" letter-spacing="-0.152" fill="#94a3b8">4.5M</text>
<text x="65.2" y="603.5" font-size="27.03" letter-spacing="0.182" fill="#94a3b8">3.0M</text>
<text x="68" y="760.2" font-size="27.03" letter-spacing="-0.752" fill="#94a3b8">1.5M</text>
<text x="110.4" y="916.8" font-size="27.03" letter-spacing="0" fill="#94a3b8">0</text>
<text x="69.5" y="938.6" font-size="27.03" letter-spacing="0.093" fill="#94a3b8">2016-10-28</text>
<text x="263.5" y="938.6" font-size="27.03" letter-spacing="-0.962" fill="#94a3b8">2017-11-12</text>
<text x="439" y="938.6" font-size="27.03" letter-spacing="-0.351" fill="#94a3b8">2018-11-07</text>
<text x="624.5" y="938.6" font-size="27.03" letter-spacing="-0.796" fill="#94a3b8">2019-11-12</text>
<text x="805" y="938.6" font-size="27.03" letter-spacing="-0.184" fill="#94a3b8">2020-11-16</text>
<text x="988.5" y="938.6" font-size="27.03" letter-spacing="-1.184" fill="#94a3b8">2021-11-11</text>
<text x="1166.5" y="938.6" font-size="27.03" letter-spacing="-0.24" fill="#94a3b8">2022-11-16</text>
<text x="1350.5" y="938.6" font-size="27.03" letter-spacing="-0.24" fill="#94a3b8">2023-11-21</text>
<text x="1531.5" y="938.6" font-size="27.03" letter-spacing="0.204" fill="#94a3b8">2024-11-25</text>
<text x="1871" y="938.6" font-size="27.03" letter-spacing="-0.351" fill="#94a3b8">2025-11-19</text>
<path d="M1163.4,203.9 L1170.4,210.9 L1177.4,203.9" fill="none" stroke="#4f5766" stroke-width="3" stroke-linecap="round" stroke-linejoin="round"/>
<path d="M1530.6,203.9 L1537.6,210.9 L1544.6,203.9" fill="none" stroke="#4f5766" stroke-width="3" stroke-linecap="round" stroke-linejoin="round"/>
</svg>
<div class="tip"></div>
<span class="t" style="left:1575px;top:439.00px;font-size:24.71px;letter-spacing:-0.084px;color:#ffffff;font-weight:700">2025-11-03</span>
<span class="t" style="left:1574px;top:486.00px;font-size:22.38px;letter-spacing:0.675px;color:#a855f7;font-weight:400;-webkit-text-stroke:0.2px #a855f7">Sprout Pool</span>
<span class="t" style="left:1764.1px;top:486.00px;font-size:22.38px;letter-spacing:0.328px;color:#ffffff;font-weight:400;-webkit-text-stroke:0.2px #ffffff">25,740 ZEC</span>
<span class="t" style="left:1574px;top:518.00px;font-size:22.38px;letter-spacing:0.566px;color:#eab308;font-weight:400;-webkit-text-stroke:0.2px #eab308">Sapling Pool</span>
<span class="t" style="left:1751.7px;top:518.00px;font-size:22.38px;letter-spacing:0.291px;color:#ffffff;font-weight:400;-webkit-text-stroke:0.2px #ffffff">745,555 ZEC</span>
<span class="t" style="left:1574px;top:550.00px;font-size:22.38px;letter-spacing:0.659px;color:#84cc16;font-weight:400;-webkit-text-stroke:0.2px #84cc16">Orchard Pool</span>
<span class="t" style="left:1738.6px;top:550.00px;font-size:22.38px;letter-spacing:-0.082px;color:#ffffff;font-weight:400;-webkit-text-stroke:0.2px #ffffff">4,211,722 ZEC</span>
</main>
<footer>
<div class="sw" style="left:482px;background:#9a52e4"></div><span class="t" style="left:514px;top:1006.00px;font-size:23.4px;letter-spacing:-0.08px;color:#334155;font-weight:400">Sprout Pool — 25,656 ZEC</span>
<div class="sw" style="left:834.3px;background:#e8b010"></div><span class="t" style="left:865.6px;top:1006.00px;font-size:23.4px;letter-spacing:-0.083px;color:#334155;font-weight:400">Sapling Pool — 647,960 ZEC</span>
<div class="sw" style="left:1207.2px;background:#84cc16"></div><span class="t" style="left:1238.6px;top:1006.00px;font-size:23.4px;letter-spacing:-0.446px;color:#334155;font-weight:400">Orchard Pool — 4,148,156 ZEC</span>
</footer>
<svg width="2040" height="1056" viewBox="0 0 2040 1056" style="pointer-events:none"><defs><filter id="ws" x="-20%" y="-20%" width="140%" height="150%"><feDropShadow dx="0" dy="1.2" stdDeviation="1" flood-color="#3c4254" flood-opacity=".85"/></filter></defs>
<g fill="#fff" filter="url(#ws)" transform="translate(1892.5,1030)">
<path d="M0,-14.5 L8.6,-5.9 L5.4,-2.7 L0,-8.1 L-5.4,-2.7 L-8.6,-5.9 Z"/>
<path d="M0,14.5 L8.6,5.9 L5.4,2.7 L0,8.1 L-5.4,2.7 L-8.6,5.9 Z"/>
<path d="M0,-3.3 L3.3,0 L0,3.3 L-3.3,0 Z"/>
<path d="M-11.2,-3.3 L-7.9,0 L-11.2,3.3 L-14.5,0 Z"/>
<path d="M11.2,-3.3 L14.5,0 L11.2,3.3 L7.9,0 Z"/>
</g></svg>
<div><span class="wm" style="left:1912.3px;top:1019.3px;font-size:21px">@</span><span class="wm" style="left:1935.6px;top:1018.8px;font-size:24px">大运亨通</span></div>
</body></html>
